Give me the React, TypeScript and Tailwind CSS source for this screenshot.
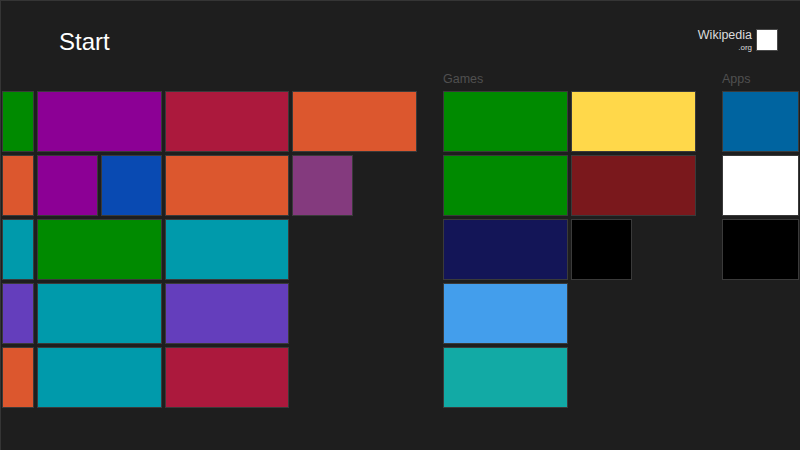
import React from "react";

type Tile = { c: string; col: string; row: string };

const g1: Tile[] = [
  { c: "bg-[#008a00]", col: "col-start-1", row: "row-start-1" },
  { c: "bg-[#8c0095]", col: "col-start-2 col-span-2", row: "row-start-1" },
  { c: "bg-[#ac193d]", col: "col-start-4 col-span-2", row: "row-start-1" },
  { c: "bg-[#dc572e]", col: "col-start-6 col-span-2", row: "row-start-1" },
  { c: "bg-[#dc572e]", col: "col-start-1", row: "row-start-2" },
  { c: "bg-[#8c0095]", col: "col-start-2", row: "row-start-2" },
  { c: "bg-[#094ab2]", col: "col-start-3", row: "row-start-2" },
  { c: "bg-[#dc572e]", col: "col-start-4 col-span-2", row: "row-start-2" },
  { c: "bg-[#843a7e]", col: "col-start-6", row: "row-start-2" },
  { c: "bg-[#009aab]", col: "col-start-1", row: "row-start-3" },
  { c: "bg-[#008a00]", col: "col-start-2 col-span-2", row: "row-start-3" },
  { c: "bg-[#009aab]", col: "col-start-4 col-span-2", row: "row-start-3" },
  { c: "bg-[#643ebc]", col: "col-start-1", row: "row-start-4" },
  { c: "bg-[#009aab]", col: "col-start-2 col-span-2", row: "row-start-4" },
  { c: "bg-[#643ebc]", col: "col-start-4 col-span-2", row: "row-start-4" },
  { c: "bg-[#dc572e]", col: "col-start-1", row: "row-start-5" },
  { c: "bg-[#009aab]", col: "col-start-2 col-span-2", row: "row-start-5" },
  { c: "bg-[#ac193d]", col: "col-start-4 col-span-2", row: "row-start-5" },
];

const g2: Tile[] = [
  { c: "bg-[#008a00]", col: "col-start-1 col-span-2", row: "row-start-1" },
  { c: "bg-[#ffd84a]", col: "col-start-3 col-span-2", row: "row-start-1" },
  { c: "bg-[#008a00]", col: "col-start-1 col-span-2", row: "row-start-2" },
  { c: "bg-[#7a181c]", col: "col-start-3 col-span-2", row: "row-start-2" },
  { c: "bg-[#131557]", col: "col-start-1 col-span-2", row: "row-start-3" },
  { c: "bg-[#000000]", col: "col-start-3", row: "row-start-3" },
  { c: "bg-[#439eec]", col: "col-start-1 col-span-2", row: "row-start-4" },
  { c: "bg-[#12aaa5]", col: "col-start-1 col-span-2", row: "row-start-5" },
];

const g3: Tile[] = [
  { c: "bg-[#0064a0]", col: "col-start-1", row: "row-start-1" },
  { c: "bg-[#ffffff]", col: "col-start-1", row: "row-start-2" },
  { c: "bg-[#000000]", col: "col-start-1", row: "row-start-3" },
];

function Tiles({ tiles }: { tiles: Tile[] }) {
  return (
    <>
      {tiles.map((t, i) => (
        <div key={i} className={`${t.c} ${t.col} ${t.row} border border-[#3a3a3a]`} />
      ))}
    </>
  );
}

export default function App() {
  return (
    <div
      className="w-[800px] h-[450px] bg-[#1e1e1e] border-t border-l border-[#353535] overflow-hidden flex flex-col"
      style={{ fontFamily: '"Liberation Sans", Arial, sans-serif' }}
    >
      <div className="h-[55px] shrink-0 flex items-start justify-between pl-[58px] pr-[22px] pt-[27px]">
        <div className="text-[24px] leading-[28px] text-white">Start</div>
        <div className="flex items-start">
          <div className="flex flex-col items-end text-[#dcdcdc]">
            <div className="text-[12.5px] leading-[15px]">Wikipedia</div>
            <div className="text-[8px] leading-[10px]">.org</div>
          </div>
          <div className="ml-[4px] mt-[1px] w-[22px] h-[22px] bg-white border border-[#4a4a4a]" />
        </div>
      </div>
      <div className="mt-[14px] flex items-start">
        <div className="ml-[1px] shrink-0 flex flex-col">
          <div className="h-[18px] mb-[3px]" />
          <div className="grid grid-cols-[32px_61px_61px_61px_60px_61px_61px] grid-rows-[repeat(5,61px)] gap-[3px]">
            <Tiles tiles={g1} />
          </div>
        </div>
        <div className="ml-[26px] shrink-0 flex flex-col">
          <div className="h-[18px] mb-[3px] text-[12.5px] leading-[18px] text-[#505050]">Games</div>
          <div className="grid grid-cols-[repeat(4,61px)] grid-rows-[repeat(5,61px)] gap-[3px]">
            <Tiles tiles={g2} />
          </div>
        </div>
        <div className="ml-[26px] shrink-0 flex flex-col">
          <div className="h-[18px] mb-[3px] text-[12.5px] leading-[18px] text-[#505050]">Apps</div>
          <div className="grid grid-cols-[77px] grid-rows-[repeat(3,61px)] gap-[3px]">
            <Tiles tiles={g3} />
          </div>
        </div>
      </div>
    </div>
  );
}
